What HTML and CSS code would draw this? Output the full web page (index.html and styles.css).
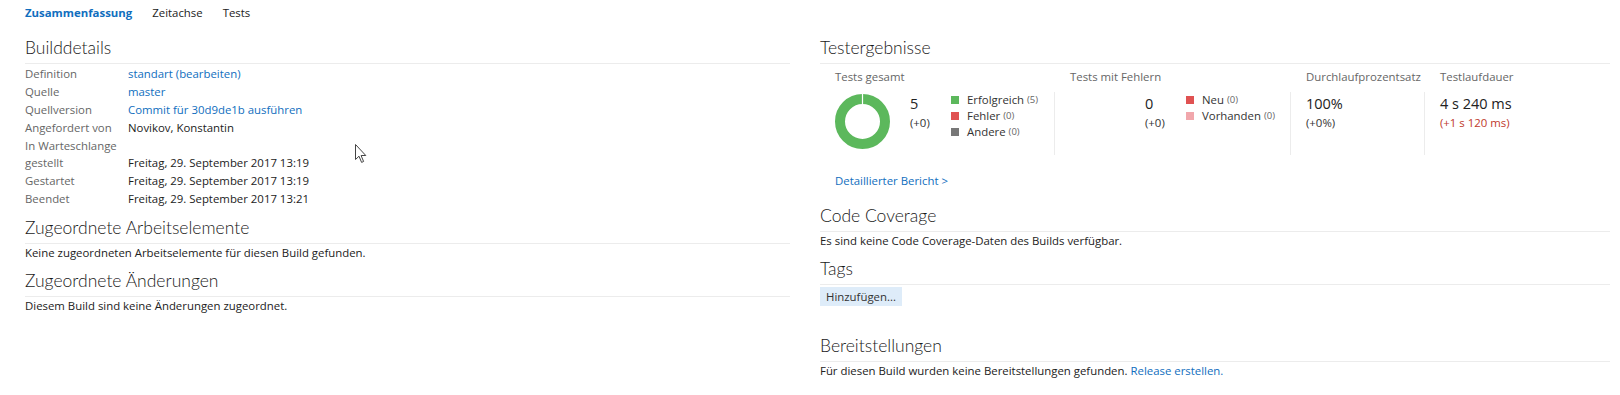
FILE: index.html
```html
<!DOCTYPE html>
<html lang="de">
<head>
<meta charset="utf-8">
<title>Build Zusammenfassung</title>
<link rel="stylesheet" href="styles.css">
</head>
<body>
<nav class="tabs">
  <span class="tab active">Zusammenfassung</span>
  <span class="tab">Zeitachse</span>
  <span class="tab">Tests</span>
</nav>
<div class="main">
  <div class="col">
    <section class="sec">
      <h2>Builddetails</h2>
      <div class="details">
        <div class="lbl">Definition</div><div class="val"><a href="#">standart (bearbeiten)</a></div>
        <div class="lbl">Quelle</div><div class="val"><a href="#">master</a></div>
        <div class="lbl">Quellversion</div><div class="val"><a href="#">Commit für 30d9de1b ausführen</a></div>
        <div class="lbl">Angefordert von</div><div class="val">Novikov, Konstantin</div>
        <div class="lbl">In Warteschlange gestellt</div><div class="val">Freitag, 29. September 2017 13:19</div>
        <div class="lbl">Gestartet</div><div class="val">Freitag, 29. September 2017 13:19</div>
        <div class="lbl">Beendet</div><div class="val">Freitag, 29. September 2017 13:21</div>
      </div>
    </section>
    <section class="sec">
      <h2>Zugeordnete Arbeitselemente</h2>
      <p class="txt">Keine zugeordneten Arbeitselemente für diesen Build gefunden.</p>
    </section>
    <section class="sec">
      <h2>Zugeordnete Änderungen</h2>
      <p class="txt">Diesem Build sind keine Änderungen zugeordnet.</p>
    </section>
  </div>
  <div class="col">
    <section class="sec sec-tests">
      <h2>Testergebnisse</h2>
      <div class="tests">
        <div class="tcol first">
          <div class="tlabel">Tests gesamt</div>
          <div class="tbody">
            <svg class="donut" width="55" height="55" viewBox="0 0 55 55">
              <circle cx="27.5" cy="27.5" r="22.5" fill="none" stroke="#5cb85c" stroke-width="10"/>
              <line x1="27.5" y1="0" x2="27.5" y2="11" stroke="#fff" stroke-width="1.2"/>
            </svg>
            <div class="num fixed">
              <div class="big">5</div>
              <div class="delta">(+0)</div>
            </div>
            <ul class="legend">
              <li><span class="sq green"></span>Erfolgreich <span class="cnt">(5)</span></li>
              <li><span class="sq red"></span>Fehler <span class="cnt">(0)</span></li>
              <li><span class="sq gray"></span>Andere <span class="cnt">(0)</span></li>
            </ul>
          </div>
        </div>
        <div class="tcol">
          <div class="tlabel">Tests mit Fehlern</div>
          <div class="tbody">
            <div class="donut-space"></div>
            <div class="num fixed">
              <div class="big">0</div>
              <div class="delta">(+0)</div>
            </div>
            <ul class="legend">
              <li><span class="sq red"></span>Neu <span class="cnt">(0)</span></li>
              <li><span class="sq pink"></span>Vorhanden <span class="cnt">(0)</span></li>
            </ul>
          </div>
        </div>
        <div class="tcol">
          <div class="tlabel">Durchlaufprozentsatz</div>
          <div class="tbody">
            <div class="num">
              <div class="big">100%</div>
              <div class="delta">(+0%)</div>
            </div>
          </div>
        </div>
        <div class="tcol">
          <div class="tlabel">Testlaufdauer</div>
          <div class="tbody">
            <div class="num">
              <div class="big">4 s 240 ms</div>
              <div class="delta bad">(+1 s 120 ms)</div>
            </div>
          </div>
        </div>
      </div>
      <a href="#" class="report">Detaillierter Bericht &gt;</a>
    </section>
    <section class="sec">
      <h2>Code Coverage</h2>
      <p class="txt">Es sind keine Code Coverage-Daten des Builds verfügbar.</p>
    </section>
    <section class="sec">
      <h2>Tags</h2>
      <div class="tagbox"><span class="addbtn">Hinzufügen...</span></div>
    </section>
    <section class="sec">
      <h2>Bereitstellungen</h2>
      <p class="txt">Für diesen Build wurden keine Bereitstellungen gefunden. <a href="#">Release erstellen.</a></p>
    </section>
  </div>
</div>
<svg class="cursor" width="13" height="20" viewBox="0 0 13 20">
  <path d="M0.5 0.5 L0.5 15.5 L4 12.2 L6.6 18.4 L8.6 17.5 L6.1 11.5 L10.8 11.5 Z" fill="#fff" stroke="#444" stroke-width="1" stroke-linejoin="round"/>
</svg>
</body>
</html>
```

FILE: styles.css
```css
body {
  margin: 0;
  font-family: "Open Sans", "Noto Sans", sans-serif;
  font-size: 11.4px;
  color: #333;
  background: #fff;
}

a {
  color: #106ebe;
  text-decoration: none;
}

.tabs {
  display: flex;
  gap: 20px;
  padding-left: 25px;
  height: 26px;
  line-height: 26px;
}

.tab {
  color: #222;
}

.tab.active {
  color: #106ebe;
  font-weight: 700;
}

.main {
  display: grid;
  grid-template-columns: 765px 790px;
  column-gap: 30px;
  padding: 10px 0 0 25px;
}

.sec + .sec {
  margin-top: 8px;
}

h2 {
  margin: 0;
  font-family: "Lato", "Open Sans", sans-serif;
  font-size: 17.5px;
  font-weight: 300;
  line-height: 24px;
  padding-bottom: 3px;
  border-bottom: 1px solid #ececec;
  color: #1a1a1a;
}

.txt {
  margin: 0;
  line-height: 17px;
  color: #222;
}

.details {
  display: grid;
  grid-template-columns: 103px 1fr;
  line-height: 17px;
  padding-bottom: 1px;
}

.lbl {
  color: #666;
  padding: 0.5px 0;
}

.val {
  align-self: end;
  padding: 0.5px 0;
  color: #222;
}

/* test results */
.sec-tests {
  padding-bottom: 7px;
}

.tests {
  display: grid;
  grid-template-columns: 234px 236px 134px 1fr;
  margin-top: 4px;
}

.tlabel {
  color: #666;
  line-height: 17px;
  padding-left: 16px;
}

.tbody {
  margin-top: 7px;
  height: 63px;
  display: flex;
  align-items: flex-start;
  padding-left: 15px;
  border-left: 1px solid #ececec;
}

.tcol.first .tlabel {
  padding-left: 15px;
}

.tcol.first .tbody {
  border-left: none;
}

.donut {
  display: block;
  margin-top: 2px;
  margin-right: 20px;
  flex: none;
}

.donut-space {
  width: 55px;
  height: 55px;
  margin-right: 20px;
  flex: none;
}

.num {
  margin-top: 2px;
  flex: none;
}

.num.fixed {
  width: 41px;
}

.big {
  font-size: 14.5px;
  line-height: 20px;
  color: #222;
}

.delta {
  line-height: 17px;
  color: #333;
}

.delta.bad {
  color: #c0392b;
}

.legend {
  list-style: none;
  margin: 0;
  padding: 0;
  line-height: 16px;
  color: #333;
}

.legend li {
  display: flex;
  align-items: center;
  white-space: pre;
}

.sq {
  width: 8px;
  height: 8px;
  margin-right: 8px;
  flex: none;
}

.sq.green { background: #5cb85c; }
.sq.red { background: #e05252; }
.sq.gray { background: #777; }
.sq.pink { background: #f1a7ac; }

.cnt {
  font-size: 9.5px;
  color: #666;
}

.report {
  display: block;
  margin-top: 17px;
  padding-left: 15px;
  line-height: 17px;
}

/* tags */
.tagbox {
  padding: 2px 0 20px;
}

.addbtn {
  display: inline-block;
  height: 19px;
  line-height: 19px;
  padding: 0 6px;
  background: #deecf9;
  color: #333;
}

.cursor {
  position: absolute;
  left: 355px;
  top: 144px;
}
```
